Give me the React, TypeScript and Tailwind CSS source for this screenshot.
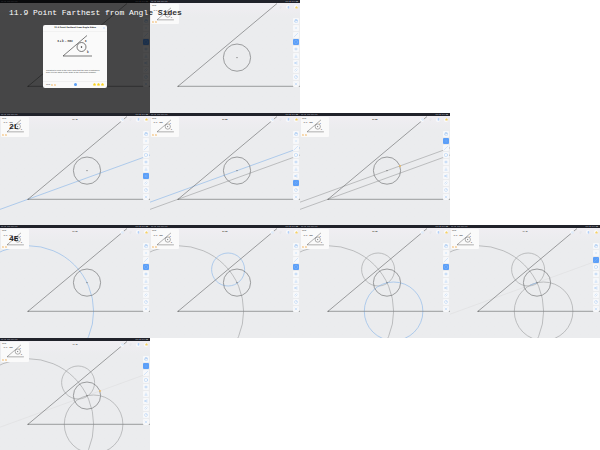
import React from 'react';
import clsx from 'clsx';
import {
  Circle,
  Dot,
  Hand,
  Lightbulb,
  Redo2,
  Slash,
  Star,
  Undo2,
  X,
} from 'lucide-react';

type Tone = 'done' | 'faint' | 'new';

type Shape =
  | { kind: 'line'; x1: number; y1: number; x2: number; y2: number; tone: Tone }
  | { kind: 'circle'; cx: number; cy: number; r: number; tone: Tone }
  | { kind: 'answer'; x: number; y: number };

interface Step {
  tool: number;
  shapes: Shape[];
  moves?: string;
  label?: string;
  dialog?: boolean;
}

const ICON = 'size-1 stroke-[2px]';

const TOOLS = [
  { name: 'Move', icon: <Hand className={ICON} /> },
  { name: 'Point', icon: <Dot className={ICON} /> },
  { name: 'Line', icon: <Slash className={ICON} /> },
  { name: 'Circle', icon: <Circle className={ICON} /> },
  { name: 'Perpendicular bisector', icon: <ToolGlyph d="M2 12h20M12 3v18M8 9v6M16 9v6" /> },
  { name: 'Perpendicular', icon: <ToolGlyph d="M3 19h18M12 4v15" /> },
  { name: 'Angle bisector', icon: <ToolGlyph d="M3 12L20 4M3 12L20 20M3 12h19" /> },
  { name: 'Parallel', icon: <ToolGlyph d="M3 15L15 3M9 21L21 9" /> },
  { name: 'Compass', icon: <ToolGlyph d="M12 3a9 9 0 1 0 .1 0M12 12l5 -6" /> },
  { name: 'Intersect', icon: <ToolGlyph d="M5 5l14 14M19 5L5 19" /> },
];

const TONES: Record<Tone, string> = {
  done: 'stroke-[#a6a7a9]',
  faint: 'stroke-[#dfe0e1]',
  new: 'stroke-[#94bbea]',
};

const bisector = (tone: Tone): Shape => ({ kind: 'line', x1: 0, y1: 96.4, x2: 150, y2: 42, tone });
const parallel = (tone: Tone): Shape => ({ kind: 'line', x1: 0, y1: 89.2, x2: 150, y2: 34.8, tone });
const bigArc = (tone: Tone): Shape => ({ kind: 'circle', cx: 28, cy: 86.3, r: 65.6, tone });
const upper = (tone: Tone): Shape => ({ kind: 'circle', cx: 78.1, cy: 44.5, r: 16.5, tone });
const lower = (tone: Tone): Shape => ({ kind: 'circle', cx: 93.6, cy: 86.3, r: 29.3, tone });
const answer: Shape = { kind: 'answer', x: 100, y: 53 };

const ROWS: Step[][] = [
  [
    { tool: 3, shapes: [], dialog: true },
    { tool: 3, shapes: [] },
  ],
  [
    { tool: 6, shapes: [bisector('new')], moves: '1L 4E', label: '2L' },
    { tool: 7, shapes: [bisector('done'), parallel('new')], moves: '2L 8E' },
    { tool: 1, shapes: [bisector('done'), parallel('done'), answer], moves: '2L 8E' },
  ],
  [
    { tool: 3, shapes: [bigArc('new')], moves: '1L 1E', label: '4E' },
    { tool: 3, shapes: [bigArc('done'), upper('new')], moves: '2L 2E' },
    { tool: 3, shapes: [bigArc('done'), upper('done'), lower('new')], moves: '3L 3E' },
    {
      tool: 2,
      shapes: [
        parallel('faint'),
        bigArc('done'),
        upper('done'),
        lower('done'),
        { kind: 'line', x1: 80, y1: 60.2, x2: 87, y2: 57.6, tone: 'new' },
      ],
      moves: '4L 4E',
    },
  ],
  [
    {
      tool: 1,
      shapes: [parallel('faint'), bigArc('done'), upper('done'), lower('done'), answer],
      moves: '4L 4E',
    },
  ],
];

function ToolGlyph({ d }: { d: string }) {
  return (
    <svg viewBox="0 0 24 24" className="size-1 fill-none stroke-current stroke-[2px]">
      <path d={d} />
    </svg>
  );
}

function StatusBar() {
  return (
    <div className="relative flex h-[3px] items-center justify-between bg-[#20222a] px-px text-[2px] leading-[3px] text-[#b8bac0]">
      <span>11:42 &nbsp;Thu Sep 12</span>
      <span className="pr-px">● ● ▲ 87% ▬</span>
    </div>
  );
}

function Drawing({ shapes }: { shapes: Shape[] }) {
  return (
    <svg viewBox="0 0 150 112.5" className="absolute inset-0 size-full fill-none">
      {shapes.map((s, i) => {
        if (s.kind === 'line') {
          return <line key={i} x1={s.x1} y1={s.y1} x2={s.x2} y2={s.y2} strokeWidth="0.7" className={TONES[s.tone]} />;
        }
        if (s.kind === 'circle') {
          return <circle key={i} cx={s.cx} cy={s.cy} r={s.r} strokeWidth="0.7" className={TONES[s.tone]} />;
        }
        return null;
      })}
      <g stroke="#77787a" strokeWidth="0.7">
        <path d="M28 86.3L127 3.5" />
        <path d="M28 86.3H150" />
        <circle cx="87" cy="57.6" r="13.6" />
      </g>
      <circle cx="28" cy="86.3" r="0.6" fill="#666" />
      <circle cx="87" cy="57.6" r="0.6" fill="#666" />
      {shapes.map((s, i) => s.kind === 'answer' && <circle key={i} cx={s.x} cy={s.y} r="0.9" fill="#f0bd62" />)}
    </svg>
  );
}

function Figure({ className }: { className: string }) {
  return (
    <svg viewBox="0 0 40 24" className={className} fill="none" stroke="#444" strokeWidth="0.7">
      <path d="M8 22L32 1.5M8 22H37" />
      <circle cx="26.5" cy="13" r="4.5" />
      <circle cx="26.5" cy="13" r="0.5" fill="#444" />
      <g fill="#333" stroke="none" fontSize="2.6" fontFamily="Liberation Sans, sans-serif" fontWeight="bold">
        <text x="2.5" y="7.5">a + b → max</text>
        <text x="30" y="8">a</text>
        <text x="32" y="19">b</text>
      </g>
    </svg>
  );
}

function GoalCard() {
  return (
    <div className="absolute left-px top-1 flex h-5 w-7 flex-col justify-between rounded-[1px] bg-[#fafafa] px-px">
      <p className="text-[2px] leading-[3px] text-[#333]">Goal</p>
      <Figure className="-mt-px h-[14px] w-6" />
      <div className="flex gap-px pb-px">
        <Star className="size-[2px] fill-[#f5b556] stroke-[#f5b556]" />
        <Star className="size-[2px] fill-[#f5b556] stroke-[#f5b556]" />
      </div>
    </div>
  );
}

function TopActions({ started }: { started: boolean }) {
  const round = 'grid size-1 place-items-center rounded-full bg-[#f8fafc]';
  return (
    <div className="absolute right-[2px] top-[5px] flex gap-1">
      {started && (
        <button aria-label="Undo" className={clsx(round, 'text-[#9cc5f7]')}><Undo2 className="size-[3px]" /></button>
      )}
      <button aria-label="Redo" className="grid size-1 place-items-center text-[#dcdfe4]"><Redo2 className="size-[3px]" /></button>
      <button aria-label="Hint" className={clsx(round, 'text-[#8fbcf6]')}><Lightbulb className="size-[3px] fill-[#b1d0f8]" /></button>
      <button aria-label="Stars" className={clsx(round, 'text-[#f8d36c]')}><Star className="size-[3px] fill-[#f8d36c]" /></button>
    </div>
  );
}

function Toolbar({ active }: { active: number }) {
  return (
    <div className="absolute right-px top-[18px] flex flex-col gap-px">
      {TOOLS.map((tool, i) => (
        <button
          key={tool.name}
          aria-label={tool.name}
          aria-pressed={i === active}
          className={clsx(
            'grid size-[6px] place-items-center rounded-[1px]',
            i === active ? 'bg-[#5c9ff8] text-[#8fbffc]' : 'bg-[#f7f8fa] text-[#8dbcf5]',
          )}
        >
          {tool.icon}
        </button>
      ))}
    </div>
  );
}

function GoalDialog() {
  return (
    <div className="absolute inset-0 grid place-items-center bg-black/70">
      <section role="dialog" aria-label="Goal" className="flex h-[63px] w-16 flex-col rounded-[2px] bg-[#fafafa] font-['Liberation_Sans',sans-serif] text-[#444]">
        <header className="flex h-[7px] items-center justify-center border-b border-[#f2f2f2]">
          <h2 className="flex-1 pl-1 text-center font-['DejaVu_Sans',sans-serif] text-[2px] leading-[3px] font-bold whitespace-nowrap text-[#222]">
            11.9 Point Farthest from Angle Sides
          </h2>
          <button aria-label="Close" className="mr-[2px] text-[#5c9ff8]"><X className="size-[2px] stroke-[3px]" /></button>
        </header>
        <Figure className="ml-3 mt-[2px] h-6 w-10" />
        <p className="mt-[11px] px-[3px] text-[2px] leading-[2px] whitespace-nowrap">
          Construct a point of the circle such that the sum of distances
          <br />
          from it to the sides of the angle is the maximum possible.
        </p>
        <footer className="mt-auto flex h-[7px] items-center justify-between border-t border-[#f0f0f0] px-[3px]">
          <span className="flex w-3 items-center gap-px text-[2px] leading-[3px]">
            Goal
            <Star className="size-[2px] fill-[#f5b556] stroke-[#f5b556]" />
            <Star className="size-[2px] fill-[#f5b556] stroke-[#f5b556]" />
          </span>
          <button aria-label="Start" className="size-[3px] rounded-full bg-[#5a9ff5]" />
          <span className="flex w-3 justify-end gap-px">
            {[0, 1, 2].map((n) => (
              <Star key={n} className="size-[3px] fill-[#fbd72b] stroke-[#fbd72b] stroke-[4px]" />
            ))}
          </span>
        </footer>
      </section>
    </div>
  );
}

function Tile({ step }: { step: Step }) {
  return (
    <article className="relative aspect-[4/3] overflow-hidden bg-linear-to-b from-[#f1eef3] via-[#ebecee] via-15% to-[#ebecee]">
      <Drawing shapes={step.shapes} />
      <StatusBar />
      {step.moves && (
        <p className="relative mt-[2px] text-center text-[2px] leading-[3px] font-bold text-[#333]">{step.moves}</p>
      )}
      {!step.dialog && <GoalCard />}
      {!step.dialog && <TopActions started={!!step.moves} />}
      <Toolbar active={step.tool} />
      {step.dialog && <GoalDialog />}
      {step.label && (
        <h2 className="absolute left-[9px] top-[10px] font-['Liberation_Mono',monospace] text-[8px] leading-[8px] font-bold text-[#222]">
          {step.label}
        </h2>
      )}
    </article>
  );
}

export default function App() {
  return (
    <main className="min-h-screen bg-white font-['Liberation_Sans',sans-serif]">
      {ROWS.map((row, r) => (
        <section key={r} className="relative grid grid-cols-4">
          {row.map((step, i) => (
            <Tile key={i} step={step} />
          ))}
          {r === 0 && (
            <h1 className="absolute left-[9px] top-[9px] font-['Liberation_Mono',monospace] text-[8px] leading-[8px] whitespace-nowrap text-white">
              11.9 Point Farthest from Angl<span className="font-bold text-[#333]">e Sides</span>
            </h1>
          )}
        </section>
      ))}
    </main>
  );
}
